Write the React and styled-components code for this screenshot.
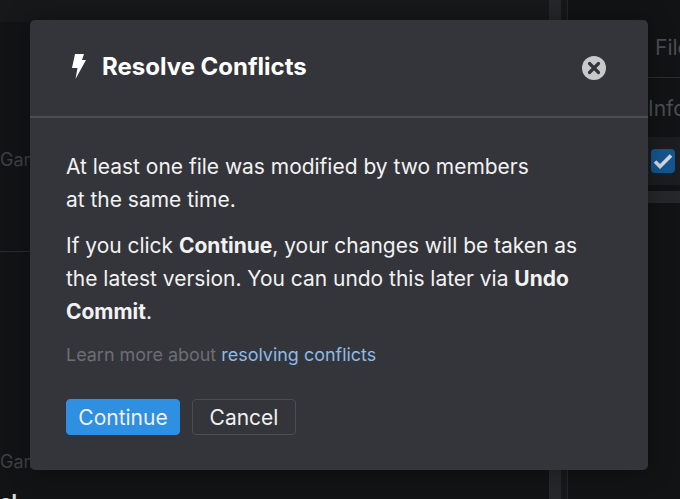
import React from "react";
import styled, { createGlobalStyle } from "styled-components";

const GlobalStyle = createGlobalStyle`
  html, body {
    margin: 0;
    height: 100%;
    background: #121315;
    font-family: Inter, "Liberation Sans", sans-serif;
    overflow: hidden;
  }
`;

const Page = styled.div`
  display: grid;
  grid-template-columns: 549px 12px 7px 1fr;
  width: 680px;
  height: 499px;
  overflow: hidden;
  position: relative;
`;

const LeftPane = styled.div`
  display: flex;
  flex-direction: column;
  overflow: hidden;
`;

const TopStrip = styled.div`
  height: 22px;
  flex: none;
  background: #17181a;
`;

const FileRow = styled.div`
  height: ${(p) => p.$height}px;
  flex: none;
  box-sizing: border-box;
  border-bottom: ${(p) => (p.$line ? "1px solid #2b2c2f" : "none")};
  padding-top: ${(p) => p.$top}px;
  font-size: 18px;
  line-height: 20px;
  color: #3f4044;
`;

const CutTitle = styled.div`
  font-size: 20px;
  font-weight: 700;
  line-height: 24px;
  color: #d8d8d8;
  margin-top: 3px;
`;

const ScrollBar = styled.div`
  background: #26272a;
`;

const Gutter = styled.div`
  background: #17181a;
  border-right: 1px solid #26272a;
`;

const RightPane = styled.div`
  display: flex;
  flex-direction: column;
  overflow: hidden;
`;

const PaneTab = styled.div`
  height: 57px;
  margin-top: 21px;
  box-sizing: border-box;
  border-bottom: 1px solid #2b2c2f;
  padding: 16px 0 0 87px;
  font-size: 21px;
  line-height: 22px;
  color: #4c4d51;
  white-space: nowrap;
`;

const PaneLabel = styled.div`
  height: 59px;
  box-sizing: border-box;
  padding: 19px 0 0 80px;
  font-size: 21px;
  line-height: 24px;
  color: #4c4d51;
  white-space: nowrap;
`;

const CheckRow = styled.div`
  height: 48px;
  display: flex;
  align-items: center;
  padding-left: 83px;
  background: #1c1d20;
`;

const CheckBox = styled.span`
  display: flex;
  align-items: center;
  justify-content: center;
  width: 24px;
  height: 24px;
  border-radius: 4px;
  background: #15568f;
`;

const Band = styled.div`
  height: 12px;
  margin-top: 6px;
  background: #26272a;
`;

const Modal = styled.div`
  position: absolute;
  left: 30px;
  top: 20px;
  width: 618px;
  height: 450px;
  box-sizing: border-box;
  background: #34353a;
  border-radius: 5px;
  color: #fff;
  box-shadow: 0 0 24px rgba(0, 0, 0, 0.35);
`;

const Header = styled.div`
  height: 98px;
  box-sizing: border-box;
  display: flex;
  align-items: center;
  gap: 16px;
  padding: 0 42px 3px 42px;
  border-bottom: 2px solid #4b4c52;
`;

const Title = styled.h2`
  flex: 1;
  margin: 0;
  font-size: 24px;
  font-weight: 700;
  line-height: 30px;
`;

const CloseButton = styled.button`
  display: flex;
  padding: 0;
  border: 0;
  background: none;
  margin-top: 2px;
`;

const Body = styled.div`
  padding: 32px 36px 0;
`;

const Paragraph = styled.p`
  margin: 0 0 13px;
  font-size: 20.96px;
  line-height: 33px;
  color: #f2f2f2;

  & + & {
    margin-bottom: 12px;
  }
`;

const Hint = styled.p`
  margin: 15px 0 0;
  font-size: 17.95px;
  line-height: 24px;
  color: #6d6e74;
`;

const HintLink = styled.a`
  color: #8dbbe6;
  text-decoration: none;
`;

const Actions = styled.div`
  display: flex;
  gap: 12px;
  margin-top: 32px;
`;

const Button = styled.button`
  height: 36px;
  width: ${(p) => p.$width}px;
  box-sizing: border-box;
  padding: 0;
  border-radius: 4px;
  border: 1px solid ${(p) => (p.$primary ? "#2f8fe0" : "#4c4d53")};
  background: ${(p) => (p.$primary ? "#2f8fe0" : "transparent")};
  color: #f0f0f0;
  font-family: inherit;
  font-size: 21px;
`;

const App = () => {
  return (
    <>
      <GlobalStyle />
      <Page>
        <LeftPane>
          <TopStrip />
          <FileRow $height={230} $top={128} $line>Gam</FileRow>
          <FileRow $height={235} $top={200}>Gam</FileRow>
          <CutTitle>al</CutTitle>
        </LeftPane>
        <ScrollBar />
        <Gutter />
        <RightPane>
          <PaneTab>File</PaneTab>
          <PaneLabel>Info</PaneLabel>
          <CheckRow>
            <CheckBox>
              <svg width="20" height="16" viewBox="0 0 20 16" fill="none">
                <path d="M2 8.5l5 5L18 2.5" stroke="#d3dbe2" strokeWidth="3.6" />
              </svg>
            </CheckBox>
          </CheckRow>
          <Band />
        </RightPane>
        <Modal>
          <Header>
            <svg width="14" height="25" viewBox="0 0 14 25">
              <path d="M3 0h9l-2 6h4L3.5 25l2-11H0z" fill="#fff" />
            </svg>
            <Title>Resolve Conflicts</Title>
            <CloseButton>
              <svg width="24" height="24" viewBox="0 0 24 24">
                <circle cx="12" cy="12" r="12" fill="#c9c9cc" />
                <path d="M7.5 7.5l9 9M16.5 7.5l-9 9" stroke="#34353a" strokeWidth="3.2" strokeLinecap="round" />
              </svg>
            </CloseButton>
          </Header>
          <Body>
            <Paragraph>
              At least one file was modified by two members
              <br />
              at the same time.
            </Paragraph>
            <Paragraph>
              If you click <b>Continue</b>, your changes will be taken as
              <br />
              the latest version. You can undo this later via <b>Undo</b>
              <br />
              <b>Commit</b>.
            </Paragraph>
            <Hint>
              Learn more about <HintLink href="#">resolving conflicts</HintLink>
            </Hint>
            <Actions>
              <Button $primary $width={114}>Continue</Button>
              <Button $width={104}>Cancel</Button>
            </Actions>
          </Body>
        </Modal>
      </Page>
    </>
  );
};

export default App;
